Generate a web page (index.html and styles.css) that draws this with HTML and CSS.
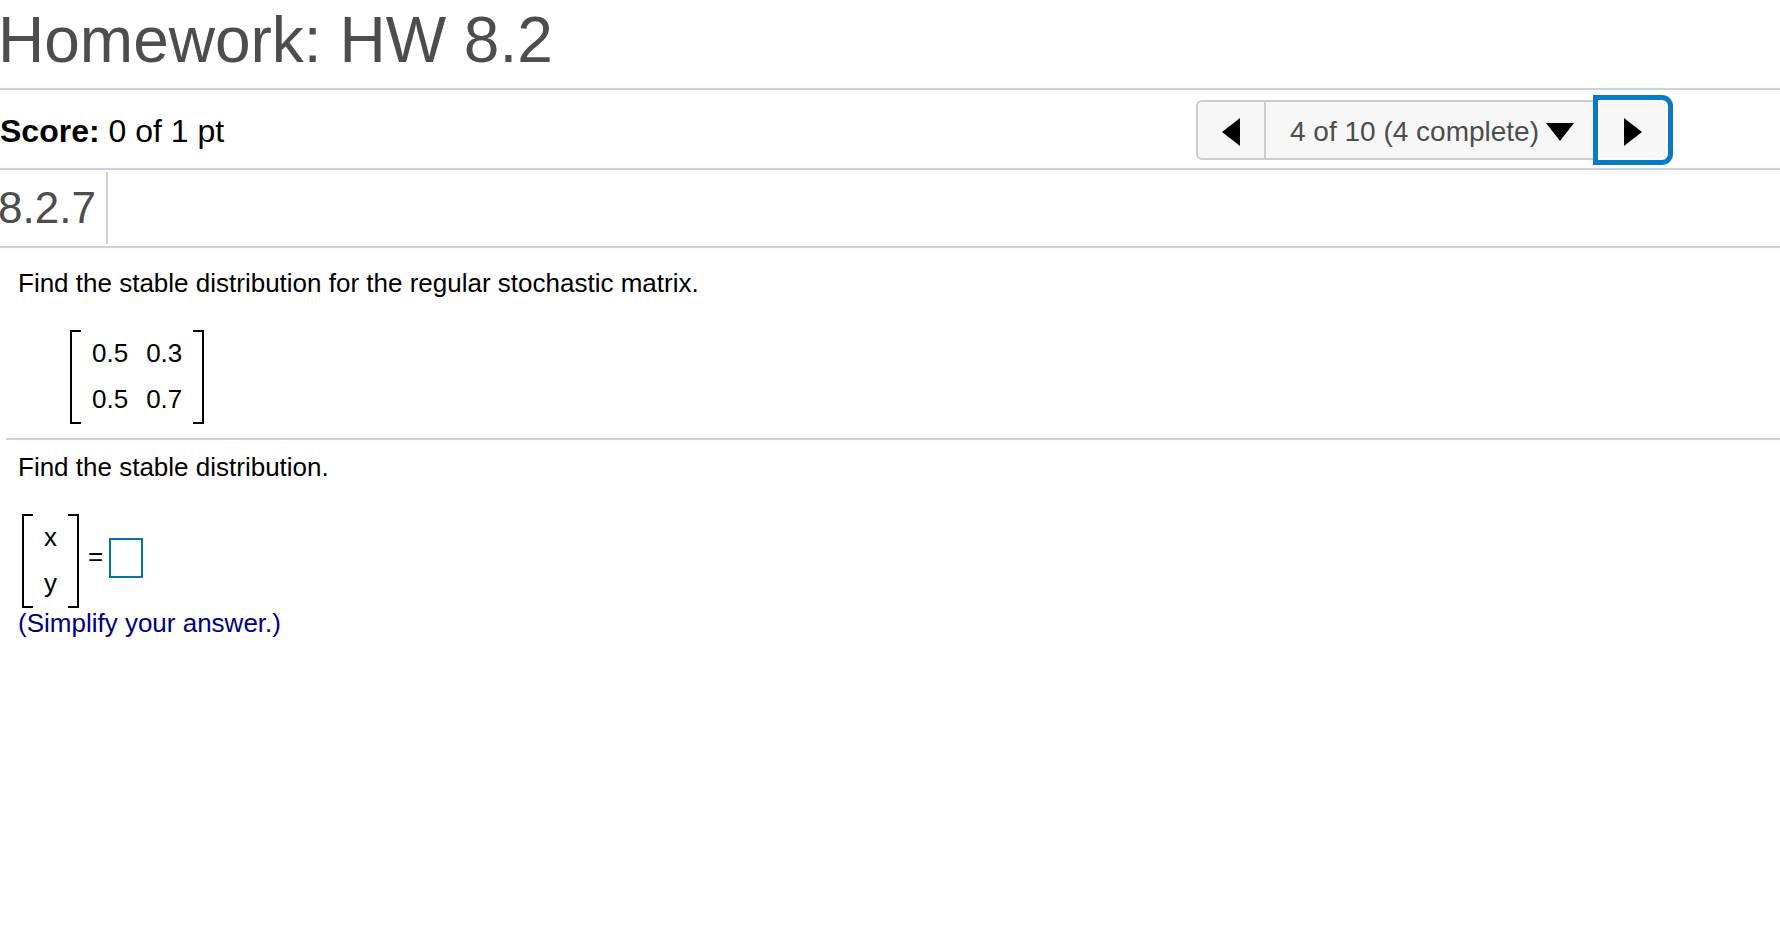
FILE: index.html
```html
<!DOCTYPE html>
<html lang="en">
<head>
    <meta charset="UTF-8">
    <meta name="viewport" content="width=device-width, initial-scale=1.0">
    <title>Homework: HW 8.2</title>
    <link rel="stylesheet" href="styles.css">
</head>
<body>
    <header class="page-header">
        <h1>Homework: HW 8.2</h1>
    </header>

    <div class="score-bar">
        <p class="score"><strong>Score:</strong> 0 of 1 pt</p>
        <nav class="pager" aria-label="Questions">
            <button type="button" class="pager-prev" aria-label="Previous question">
                <svg width="18" height="28" viewBox="0 0 18 28"><path d="M18 0v28L0 14z"/></svg>
            </button>
            <div class="pager-list">
                <select id="question" aria-label="Question">
                    <option>4 of 10 (4 complete)</option>
                </select>
                <svg width="28" height="18" viewBox="0 0 28 18"><path d="M0 0h28L14 18z"/></svg>
            </div>
            <button type="button" class="pager-next" aria-label="Next question">
                <svg width="18" height="28" viewBox="0 0 18 28"><path d="M0 0v28l18-14z"/></svg>
            </button>
        </nav>
    </div>

    <div class="exercise-bar">
        <h2>8.2.7</h2>
    </div>

    <main>
        <section class="question">
            <p>Find the stable distribution for the regular stochastic matrix.</p>
            <div class="matrix matrix-indent">
                <table>
                    <tr><td>0.5</td><td>0.3</td></tr>
                    <tr><td>0.5</td><td>0.7</td></tr>
                </table>
            </div>
        </section>

        <section class="answer">
            <p>Find the stable distribution.</p>
            <div class="equation">
                <div class="matrix">
                    <table>
                        <tr><td>x</td></tr>
                        <tr><td>y</td></tr>
                    </table>
                </div>
                <div class="answer-field">
                    <label for="answer">=</label>
                    <input type="text" id="answer" name="answer" autocomplete="off">
                </div>
            </div>
            <p class="hint">(Simplify your answer.)</p>
        </section>
    </main>
</body>
</html>
```
FILE: styles.css
```css
/* General Styles */
* {
    box-sizing: border-box;
}

body {
    margin: 0;
    font-family: "Liberation Sans", Arial, sans-serif;
    font-size: 26px;
    line-height: 30px;
    color: #000;
    background-color: #fff;
}

h1, h2, p {
    margin: 0;
    font-weight: normal;
}

svg {
    display: block;
    flex: none;
}

/* Header */
.page-header {
    padding-bottom: 8px;
    border-bottom: 2px solid #ccd0e0;
}

h1 {
    font-size: 64px;
    line-height: 80px;
    color: #4d4d4d;
    margin-left: -2px;
}

/* Score and question pager */
.score-bar {
    display: flex;
    justify-content: space-between;
    align-items: center;
    padding: 10px 112px 8px 0;
    border-bottom: 2px solid #ccd0e0;
}

.score {
    padding-top: 2px;
    font-size: 32px;
    line-height: 36px;
}

.pager {
    display: flex;
    height: 60px;
}

.pager button {
    display: flex;
    justify-content: center;
    align-items: center;
    width: 70px;
    padding: 4px 0 0;
    border: 2px solid #ccc;
    background-color: #f7f7f7;
    cursor: pointer;
}

.pager .pager-prev {
    border-radius: 6px 0 0 6px;
}

.pager-list {
    display: flex;
    align-items: center;
    gap: 6px;
    padding: 4px 24px 0;
    border: solid #ccc;
    border-width: 2px 0;
    background-color: #f7f7f7;
}

.pager-list select {
    appearance: none;
    padding: 0;
    border: none;
    background: none;
    font-family: inherit;
    font-size: 28px;
    line-height: 32px;
    color: #4d4d4d;
}

/* current focus */
.pager .pager-next {
    border-color: #fff;
    border-radius: 0 6px 6px 0;
    box-shadow: 0 0 0 5px #0a7ac8;
}

/* Exercise number */
.exercise-bar {
    display: flex;
    padding: 2px 0;
    border-bottom: 2px solid #ccd0e0;
}

h2 {
    font-size: 44px;
    line-height: 72px;
    color: #4d4d4d;
    margin-left: -2px;
    padding-right: 10px;
    border-right: 2px solid #ccd0e0;
}

/* Question */
.question {
    margin-left: 6px;
    padding: 20px 12px 14px;
    border-bottom: 2px solid #ccd0e0;
}

.answer {
    padding: 12px 18px;
}

.matrix {
    display: inline-flex;
    height: 94px;
}

.matrix::before,
.matrix::after {
    content: "";
    width: 9px;
    border: 2px solid #000;
}

.matrix::before {
    border-right: none;
}

.matrix::after {
    border-left: none;
}

.matrix table {
    border-collapse: collapse;
    margin: 0 2px;
    height: 92px;
}

.matrix td {
    padding: 0 9px;
    line-height: 46px;
    text-align: center;
}

.matrix-indent {
    display: flex;
    margin: 32px 0 0 52px;
}

.equation {
    display: flex;
    align-items: center;
    margin: 32px 0 0 4px;
}

.answer-field {
    display: flex;
    align-items: center;
    gap: 6px;
    padding: 0 0 6px 9px;
}

.answer-field label {
    padding-bottom: 4px;
}

.answer-field input {
    width: 34px;
    height: 40px;
    padding: 0 4px;
    border: 2px solid #007a99;
    font: inherit;
    outline: none;
}

.hint {
    color: #000080;
}
```
